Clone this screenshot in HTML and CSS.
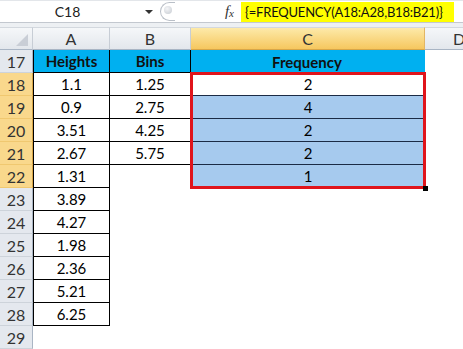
FILE: index.html
```html
<!DOCTYPE html>
<html lang="en">

<head>
    <meta charset="UTF-8">
    <meta name="viewport" content="width=device-width, initial-scale=1.0">
    <title>FREQUENCY</title>
    <link rel="stylesheet" href="styles.css">
</head>

<body>

    <div class="formula-bar">
        <div class="name-box">
            <span class="cell-ref">C18</span>
            <span class="caret"></span>
        </div>
        <div class="grip"><span class="knob"></span></div>
        <div class="fx"><i>f</i><sub>x</sub></div>
        <div class="formula">{=FREQUENCY(A18:A28,B18:B21)}</div>
    </div>
    <div class="band"></div>

    <div class="sheet">
        <!-- column headers -->
        <div class="corner">
            <svg width="14" height="14" viewBox="0 0 14 14"><polygon points="13,1 13,13 1,13" fill="#c9ced6" /></svg>
        </div>
        <div class="col-head">A</div>
        <div class="col-head">B</div>
        <div class="col-head active">C</div>
        <div class="col-head last">D</div>

        <!-- row 17 -->
        <div class="row-head">17</div>
        <div class="cell box title first">Heights</div>
        <div class="cell box title">Bins</div>
        <div class="cell title freq">Frequency</div>
        <div class="cell"></div>

        <!-- rows 18 - 22 -->
        <div class="row-head sel">18</div>
        <div class="cell box first">1.1</div>
        <div class="cell box">1.25</div>
        <div class="result">
            <div class="res-cell current">2</div>
            <div class="res-cell">4</div>
            <div class="res-cell">2</div>
            <div class="res-cell">2</div>
            <div class="res-cell end">1</div>
            <span class="handle"></span>
        </div>
        <div class="cell"></div>

        <div class="row-head sel">19</div>
        <div class="cell box first">0.9</div>
        <div class="cell box">2.75</div>
        <div class="cell"></div>

        <div class="row-head sel">20</div>
        <div class="cell box first">3.51</div>
        <div class="cell box">4.25</div>
        <div class="cell"></div>

        <div class="row-head sel">21</div>
        <div class="cell box first">2.67</div>
        <div class="cell box">5.75</div>
        <div class="cell"></div>

        <div class="row-head sel">22</div>
        <div class="cell box first">1.31</div>
        <div class="cell"></div>
        <div class="cell"></div>

        <!-- rows 23 - 29 -->
        <div class="row-head">23</div>
        <div class="cell box first">3.89</div>
        <div class="cell wide"></div>

        <div class="row-head">24</div>
        <div class="cell box first">4.27</div>
        <div class="cell wide"></div>

        <div class="row-head">25</div>
        <div class="cell box first">1.98</div>
        <div class="cell wide"></div>

        <div class="row-head">26</div>
        <div class="cell box first">2.36</div>
        <div class="cell wide"></div>

        <div class="row-head">27</div>
        <div class="cell box first">5.21</div>
        <div class="cell wide"></div>

        <div class="row-head">28</div>
        <div class="cell box first">6.25</div>
        <div class="cell wide"></div>

        <div class="row-head">29</div>
        <div class="cell"></div>
        <div class="cell wide"></div>
    </div>

</body>

</html>
```

FILE: styles.css
```css
* {
    box-sizing: border-box;
    margin: 0;
    padding: 0;
}

body {
    background-color: #fff;
    font-family: Lato, "Open Sans", sans-serif;
    color: #000;
    overflow: hidden;
}

/* formula bar */
.formula-bar {
    display: flex;
    align-items: center;
    height: 23px;
    border-top: 1px solid #e3e6ea;
    border-bottom: 1px solid #c3c8cf;
    background-color: #fff;
}

.name-box {
    width: 158px;
    height: 100%;
    display: flex;
    align-items: center;
    position: relative;
}

.cell-ref {
    flex: 1;
    text-align: center;
    font-size: 14px;
    color: #222;
    padding-right: 10px;
}

.caret {
    width: 0;
    height: 0;
    border-left: 4px solid transparent;
    border-right: 4px solid transparent;
    border-top: 4px solid #333;
    margin-right: 5px;
}

.grip {
    width: 15px;
    height: 19px;
    border: 1px solid #b9bfc7;
    border-right: none;
    border-radius: 10px 0 0 10px;
    display: flex;
    align-items: center;
    justify-content: center;
    margin-left: 2px;
}

.knob {
    width: 8px;
    height: 8px;
    border-radius: 50%;
    background: radial-gradient(circle at 40% 35%, #f4f5f7, #c5cad1);
    margin-top: -3px;
}

.fx {
    width: 66px;
    text-align: right;
    padding-right: 7px;
    font-family: "Liberation Serif", serif;
    font-size: 15px;
    color: #333;
}

.fx sub {
    font-size: 11px;
    font-style: italic;
    vertical-align: -1px;
}

.formula {
    width: 213px;
    height: 20px;
    margin-top: 1px;
    background-color: #ffff00;
    font-size: 13px;
    letter-spacing: -0.2px;
    line-height: 20px;
    padding-left: 4px;
    color: #111;
    white-space: nowrap;
    overflow: hidden;
}

.band {
    height: 4px;
    background-color: #edf0f3;
}

/* sheet grid */
.sheet {
    display: grid;
    grid-template-columns: 33px 77px 81px 234px 1fr;
    grid-auto-rows: 23px;
    font-size: 15px;
}

.corner,
.col-head {
    background: linear-gradient(#f5f7f9, #e3e7ec);
    border-top: 1px solid #d3d8de;
    border-right: 1px solid #c7cdd5;
    border-bottom: 1px solid #a9b5c4;
}

.corner {
    display: flex;
    align-items: flex-end;
    justify-content: flex-end;
    padding: 0 3px 2px 0;
}

.col-head {
    display: flex;
    align-items: center;
    justify-content: center;
    font-size: 16px;
    color: #333;
}

.col-head.active {
    background: linear-gradient(#fdeaa9, #f6c75f);
    border-right-color: #e2b664;
    border-bottom-color: #d8a648;
}

.col-head.last {
    justify-content: flex-start;
    padding-left: 28px;
    border-right: none;
}

.row-head {
    background-color: #e4e8ee;
    border-right: 1px solid #a9b5c4;
    border-bottom: 1px solid #cdd3da;
    display: flex;
    align-items: center;
    justify-content: center;
    font-size: 16px;
    color: #333;
}

.row-head.sel {
    background-color: #f9d88c;
    border-right-color: #d8a648;
    border-bottom-color: #f0c870;
}

.cell {
    display: flex;
    align-items: center;
    justify-content: center;
}

.cell.wide {
    grid-column: span 3;
}

.cell.box {
    border-right: 1px solid #000;
    border-bottom: 1px solid #000;
}

.cell.box.first {
    border-left: 1px solid #000;
}

.cell.title {
    background-color: #00b0f0;
    font-weight: bold;
    color: #111;
}

.cell.freq {
    padding-right: 2px;
}

/* array result C18:C22 */
.result {
    grid-row: span 5;
    display: flex;
    flex-direction: column;
    position: relative;
}

.result::after {
    content: "";
    position: absolute;
    top: -1px;
    left: -1px;
    right: -1px;
    bottom: -1px;
    border: 3px solid #e0141b;
}

.res-cell {
    height: 23px;
    display: flex;
    align-items: center;
    justify-content: center;
    background-color: #a6caee;
    border-bottom: 1px solid #1b2b45;
}

.res-cell.current {
    background-color: #fff;
}

.res-cell.end {
    border-bottom: 1px solid #fff;
}

.handle {
    position: absolute;
    right: -3px;
    bottom: -3px;
    width: 5px;
    height: 5px;
    background-color: #000;
    z-index: 1;
}
```
